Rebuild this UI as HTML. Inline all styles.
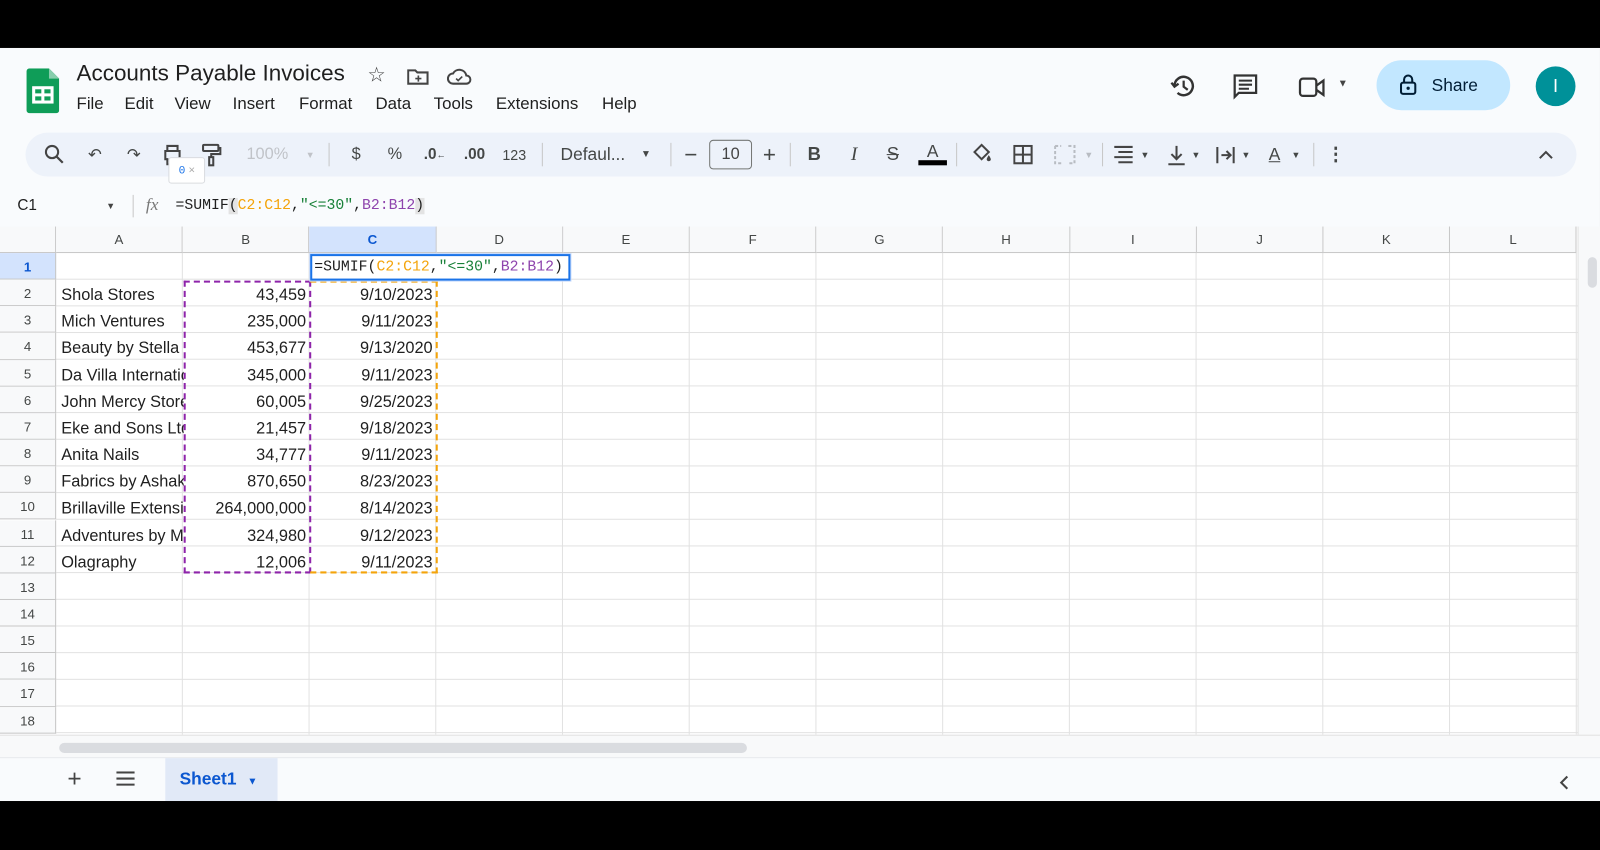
<!DOCTYPE html>
<html><head><meta charset="utf-8"><style>
*{box-sizing:border-box;margin:0;padding:0}
body{width:1600px;height:850px;overflow:hidden;background:#000;font-family:"Liberation Sans",Arial,sans-serif}
#w{position:absolute;left:0;top:0;width:1568px;height:833px;transform:scale(1.0204);transform-origin:0 0;background:#000}
#app{position:absolute;left:0;top:47px;width:1568px;height:738px;background:#f9fbfd;overflow:hidden}
.a{position:absolute}
.menu span{position:absolute;top:0}
.tb{position:absolute;top:0;height:43px;display:flex;align-items:center;justify-content:center;color:#444746;font-size:16px}
.mono{font-family:"Liberation Mono",monospace}
.hd{position:absolute;top:175px;height:26px;border-right:1px solid #c7c7c7;border-bottom:1px solid #c7c7c7;text-align:center;font-size:13px;line-height:26px;color:#444746;background:#f8f9fa}
.rn{position:absolute;left:0;width:55px;border-bottom:1px solid #c7c7c7;border-right:1px solid #c7c7c7;text-align:center;font-size:13px;color:#444746;background:#f8f9fa}
.c{position:absolute;font-size:16px;color:#1f1f1f;white-space:nowrap;overflow:hidden}
</style></head><body><div id="w"><div id="app">
<svg class="a" style="left:26px;top:20px" width="32" height="44" viewBox="0 0 32 44"><path d="M3 0h19l10 10v31a3 3 0 0 1-3 3H3a3 3 0 0 1-3-3V3a3 3 0 0 1 3-3z" fill="#0f9d58"/><path d="M22 0v10h10z" fill="#87ceac"/><rect x="7" y="19" width="18" height="14" fill="none" stroke="#fff" stroke-width="3"/><path d="M7 26h18M16 19v14" stroke="#fff" stroke-width="3"/></svg>
<div class="a" style="left:75px;top:12px;font-size:22px;color:#1f1f1f">Accounts Payable Invoices</div>
<div class="a" style="left:360px;top:14px;font-size:20px;color:#444">☆</div>
<svg class="a" style="left:399px;top:19px" width="22" height="18"><path d="M1 3h7l2 2h10v11H1z" fill="none" stroke="#444" stroke-width="2"/><path d="M11 8v6M8 11h6" stroke="#444" stroke-width="1.6"/></svg>
<svg class="a" style="left:438px;top:19px" width="24" height="18"><path d="M6 16a5 5 0 0 1 0-10 7 7 0 0 1 13 2 4 4 0 0 1 0 8z" fill="none" stroke="#444" stroke-width="2"/><path d="M9 11l2 2 4-4" fill="none" stroke="#444" stroke-width="1.6"/></svg>
<div class="a menu" style="left:0;top:46px;font-size:16.5px;color:#1f1f1f"><span style="left:75px">File</span><span style="left:122px">Edit</span><span style="left:171px">View</span><span style="left:228px">Insert</span><span style="left:293px">Format</span><span style="left:368px">Data</span><span style="left:425px">Tools</span><span style="left:486px">Extensions</span><span style="left:590px">Help</span></div>
<svg class="a" style="left:1147px;top:24px" width="26" height="26" viewBox="0 0 26 26"><path d="M4 13a9 9 0 1 1 3 7" fill="none" stroke="#333" stroke-width="2.4"/><path d="M1 10l3 4 4-3" fill="none" stroke="#333" stroke-width="2.2"/><path d="M13 8v6l4 3" fill="none" stroke="#333" stroke-width="2.2"/></svg>
<svg class="a" style="left:1208px;top:25px" width="26" height="26"><path d="M2 2h21v17H6l-4 4z" fill="none" stroke="#333" stroke-width="2.2"/><path d="M6 7h13M6 11h13M6 15h10" stroke="#333" stroke-width="2"/></svg>
<svg class="a" style="left:1272px;top:28px" width="28" height="22"><rect x="2" y="2" width="16" height="17" rx="3" fill="none" stroke="#333" stroke-width="2.2"/><path d="M18 9l7-5v14l-7-5" fill="none" stroke="#333" stroke-width="2.2"/></svg>
<div class="a" style="left:1311px;top:30px;font-size:10px;color:#444">▼</div>
<div class="a" style="left:1349px;top:12px;width:131px;height:49px;border-radius:25px;background:#c2e7ff;font-size:17px;color:#001d35;line-height:49px;padding-left:54px">Share</div>
<svg class="a" style="left:1371px;top:25px" width="18" height="22"><path d="M5 9V6a4 4 0 0 1 8 0v3" fill="none" stroke="#001d35" stroke-width="2"/><rect x="2" y="9" width="14" height="11" rx="2" fill="none" stroke="#001d35" stroke-width="2"/><circle cx="9" cy="14.5" r="1.6" fill="#001d35"/></svg>
<div class="a" style="left:1505px;top:18px;width:39px;height:39px;border-radius:50%;background:#009199;color:#fff;text-align:center;line-height:39px;font-size:18px">I</div>
<div class="a" style="left:25px;top:83px;width:1520px;height:43px;border-radius:22px;background:#edf2fa">
<svg class="tb" style="left:18px;top:11px" width="20" height="20"><circle cx="8" cy="8" r="6" fill="none" stroke="#444" stroke-width="2"/><path d="M12.5 12.5l6 6" stroke="#444" stroke-width="2.2"/></svg>
<div class="tb" style="left:58px;width:20px">↶</div><div class="tb" style="left:96px;width:20px">↷</div>
<svg class="tb" style="left:134px;top:11px" width="20" height="22"><path d="M5 7V2h10v5M3 7h14v8h-2v5H5v-5H3z" fill="none" stroke="#444" stroke-width="2"/></svg>
<svg class="tb" style="left:172px;top:10px" width="20" height="24"><rect x="2" y="2" width="15" height="6" rx="1" fill="none" stroke="#444" stroke-width="2"/><path d="M17 5h2v6h-9v3" fill="none" stroke="#444" stroke-width="2"/><rect x="8" y="14" width="4" height="8" fill="none" stroke="#444" stroke-width="2"/></svg>
<div class="tb" style="left:212px;width:50px;color:#c0c3c8">100%</div><div class="tb" style="left:272px;width:14px;font-size:9px;color:#c0c3c8">▼</div>
<div class="a" style="left:297px;top:10px;width:1px;height:23px;background:#c7c7c7"></div>
<div class="tb" style="left:316px;width:16px">$</div><div class="tb" style="left:352px;width:20px">%</div>
<div class="tb" style="left:388px;width:26px;font-size:15px;font-weight:bold">.0<sub style="font-size:9px">←</sub></div>
<div class="tb" style="left:427px;width:26px;font-size:15px;font-weight:bold">.00</div>
<div class="tb" style="left:465px;width:28px;font-size:14px">123</div>
<div class="a" style="left:506px;top:10px;width:1px;height:23px;background:#c7c7c7"></div>
<div class="tb" style="left:521px;width:70px;font-size:17px">Defaul...</div><div class="tb" style="left:602px;width:12px;font-size:10px">▼</div>
<div class="a" style="left:632px;top:10px;width:1px;height:23px;background:#c7c7c7"></div>
<div class="tb" style="left:642px;width:20px;font-size:22px">−</div>
<div class="a" style="left:670px;top:7px;width:42px;height:29px;border:1px solid #747775;border-radius:4px;text-align:center;line-height:27px;font-size:16px;color:#444">10</div>
<div class="tb" style="left:719px;width:20px;font-size:22px">+</div>
<div class="a" style="left:749px;top:10px;width:1px;height:23px;background:#c7c7c7"></div>
<div class="tb" style="left:763px;width:20px;font-weight:bold;font-size:18px">B</div>
<div class="tb" style="left:802px;width:20px;font-style:italic;font-size:19px;font-family:'Liberation Serif',serif">I</div>
<div class="tb" style="left:839px;width:22px;font-size:18px;text-decoration:line-through">S</div>
<div class="tb" style="left:875px;width:28px;font-size:17px;align-items:flex-start;padding-top:9px">A</div><div class="a" style="left:875px;top:27px;width:28px;height:5px;background:#000"></div>
<div class="a" style="left:912px;top:10px;width:1px;height:23px;background:#c7c7c7"></div>
<svg class="tb" style="left:927px;top:10px" width="22" height="20"><path d="M3 9l7-7 7 7-7 7z" fill="none" stroke="#444" stroke-width="2"/><path d="M17 12q2 3 2 4a2 2 0 0 1-4 0q0-1 2-4z" fill="#444"/></svg>
<svg class="tb" style="left:968px;top:12px" width="20" height="20"><rect x="1" y="1" width="17" height="17" fill="none" stroke="#444" stroke-width="2"/><path d="M1 9.5h17M9.5 1v17" stroke="#444" stroke-width="2"/></svg>
<svg class="tb" style="left:1008px;top:12px" width="22" height="20"><path d="M1 1h6M1 1v17h6M14 1h6v17h-6" fill="none" stroke="#b8bcc2" stroke-width="2" stroke-dasharray="3 2"/></svg>
<div class="tb" style="left:1037px;width:10px;font-size:9px;color:#b8bcc2">▼</div>
<div class="a" style="left:1055px;top:10px;width:1px;height:23px;background:#c7c7c7"></div>
<svg class="tb" style="left:1066px;top:12px" width="20" height="20"><path d="M1 2h18M5 7h14M1 12h18M5 17h14" stroke="#444" stroke-width="2"/></svg><div class="tb" style="left:1092px;width:10px;font-size:9px">▼</div>
<svg class="tb" style="left:1118px;top:11px" width="20" height="22"><path d="M10 2v13M5 10l5 5 5-5M2 20h16" fill="none" stroke="#444" stroke-width="2"/></svg><div class="tb" style="left:1142px;width:10px;font-size:9px">▼</div>
<svg class="tb" style="left:1166px;top:11px" width="20" height="22"><path d="M2 3v16M18 3v16M6 11h8M11 7l4 4-4 4" fill="none" stroke="#444" stroke-width="2"/></svg><div class="tb" style="left:1191px;width:10px;font-size:9px">▼</div>
<div class="tb" style="left:1213px;width:22px;font-size:17px;text-decoration:underline">A</div><div class="tb" style="left:1240px;width:10px;font-size:9px">▼</div>
<div class="a" style="left:1262px;top:10px;width:1px;height:23px;background:#c7c7c7"></div>
<div class="tb" style="left:1278px;width:12px;font-size:18px;font-weight:bold">⋮</div>
<svg class="tb" style="left:1482px;top:16px" width="16" height="12"><path d="M2 9l6-6 6 6" fill="none" stroke="#444" stroke-width="2"/></svg>
</div>
<div class="a" style="left:165px;top:107px;width:36px;height:26px;background:#fff;border:1px solid #dadce0;border-radius:3px;font-size:11px;line-height:24px;padding-left:9px"><span class="mono" style="color:#1a73e8">0</span> <span style="color:#aaa">×</span></div>
<div class="a" style="left:17px;top:146px;font-size:15px;color:#1f1f1f">C1</div>
<div class="a" style="left:104px;top:150px;font-size:9px;color:#444">▼</div>
<div class="a" style="left:130px;top:144px;width:1px;height:22px;background:#c7c7c7"></div>
<div class="a" style="left:143px;top:144px;font-size:17px;font-style:italic;color:#777;font-family:'Liberation Serif',serif">fx</div>
<div class="a mono" style="left:172px;top:147px;font-size:14.5px;color:#1f1f1f">=SUMIF<span style="background:#e3e3e3">(</span><span style="color:#f4a40b">C2:C12</span>,<span style="color:#188038">"&lt;=30"</span>,<span style="color:#8e44ad">B2:B12</span><span style="background:#e3e3e3">)</span></div>
<div class="a" style="left:0;top:175px;width:1546px;height:498px;background:#fff;overflow:hidden">
<div style="position:absolute;left:55px;top:26px;width:1491px;height:472px;background-image:linear-gradient(#e1e1e1 1px,transparent 1px),linear-gradient(90deg,#e1e1e1 1px,transparent 1px);background-size:100% 26.15px,124.2px 100%;background-position:0 -1px,-1px 0"></div>
</div>
<div class="hd" style="left:0;width:55px"></div>
<div id="hds"></div>
<div id="rows"></div>
<div id="cells"></div>
<div class="a" style="left:180px;top:228px;width:125px;height:287px;border:2px dashed #8e24aa"></div>
<div class="a" style="left:304px;top:228px;width:125px;height:287px;border:2px dashed #f4a40b;border-left:none"></div>
<div class="a mono" style="left:304px;top:202px;width:255px;height:26px;background:#fff;border:2px solid #1a73e8;box-shadow:0 0 0 1px #c6dafc;font-size:14.5px;line-height:22px;padding-left:2px;color:#1f1f1f">=SUMIF(<span style="color:#f4a40b">C2:C12</span>,<span style="color:#188038">"&lt;=30"</span>,<span style="color:#8e44ad">B2:B12</span>)</div>
<div class="a" style="left:1546px;top:175px;width:22px;height:498px;background:#f8f9fa;border-left:1px solid #e1e1e1"></div>
<div class="a" style="left:1556px;top:205px;width:9px;height:30px;border-radius:5px;background:#dadce0"></div>
<div class="a" style="left:0;top:673px;width:1568px;height:22px;background:#f8f9fa;border-top:1px solid #e1e1e1"></div>
<div class="a" style="left:58px;top:681px;width:674px;height:10px;border-radius:5px;background:#dadce0"></div>
<div class="a" style="left:0;top:695px;width:1568px;height:43px;background:#f9fbfd;border-top:1px solid #e8eaed"></div>
<div class="a" style="left:66px;top:703px;font-size:24px;color:#444">+</div>
<svg class="a" style="left:114px;top:709px" width="18" height="14"><path d="M0 1h18M0 7h18M0 13h18" stroke="#444" stroke-width="2"/></svg>
<div class="a" style="left:162px;top:696px;width:110px;height:42px;background:#e1e9f7;color:#0b57d0;font-weight:bold;font-size:17px;line-height:42px;padding-left:14px">Sheet1 <span style="font-size:10px;margin-left:6px">▼</span></div>
<svg class="a" style="left:1528px;top:713px" width="10" height="14"><path d="M8 1L2 7l6 6" fill="none" stroke="#444" stroke-width="2"/></svg>
</div></div>
<script>
var L='ABCDEFGHIJKL',h='';
for(var i=0;i<12;i++){var sel=i==2;h+='<div class="hd" style="left:'+(55+i*124.2)+'px;width:124.2px;'+(sel?'background:#d3e3fd;font-weight:bold;color:#0b57d0':'')+'">'+L[i]+'</div>';}
document.getElementById('hds').innerHTML=h;h='';
for(var r=1;r<=18;r++){h+='<div class="rn" style="top:'+(201+(r-1)*26.15)+'px;height:26.15px;line-height:28px;'+(r==1?'background:#d3e3fd;font-weight:bold;color:#0b57d0':'')+'">'+r+'</div>';}
document.getElementById('rows').innerHTML=h;h='';
var d=[["Shola Stores","43,459","9/10/2023"],["Mich Ventures","235,000","9/11/2023"],["Beauty by Stella","453,677","9/13/2020"],["Da Villa International","345,000","9/11/2023"],["John Mercy Stores","60,005","9/25/2023"],["Eke and Sons Ltd","21,457","9/18/2023"],["Anita Nails","34,777","9/11/2023"],["Fabrics by Ashake","870,650","8/23/2023"],["Brillaville Extensions","264,000,000","8/14/2023"],["Adventures by Mike","324,980","9/12/2023"],["Olagraphy","12,006","9/11/2023"]];
for(var k=0;k<d.length;k++){var t=203+(k+1)*26.15;
h+='<div class="c" style="left:60px;top:'+t+'px;width:120px;line-height:27px">'+d[k][0]+'</div>';
h+='<div class="c" style="left:182px;top:'+t+'px;width:118px;text-align:right;line-height:27px">'+d[k][1]+'</div>';
h+='<div class="c" style="left:306px;top:'+t+'px;width:118px;text-align:right;line-height:27px">'+d[k][2]+'</div>';}
document.getElementById('cells').innerHTML=h;
</script>
</body></html>
